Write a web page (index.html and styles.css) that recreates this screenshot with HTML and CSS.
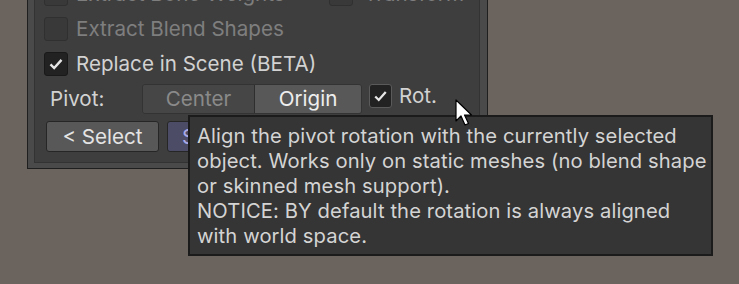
FILE: index.html
```html
<!DOCTYPE html>
<html>
<head>
<meta charset="utf-8">
<link rel="stylesheet" href="styles.css">
</head>
<body>
<div class="window">
  <div class="inner">
    <div class="row check-row">
      <span class="cb cb-off"></span><span class="lbl dis first-lbl">Extract Bone Weights</span>
      <span class="cb cb-off"></span><span class="lbl dis second-lbl">Transform</span>
    </div>
    <div class="row check-row">
      <span class="cb cb-off"></span><span class="lbl dis">Extract Blend Shapes</span>
    </div>
    <div class="row check-row">
      <span class="cb cb-on"><svg viewBox="0 0 24 24" width="24" height="24"><path d="M6 12.5 L10 16.5 L18 7.5" fill="none" stroke="#e6e6e6" stroke-width="2.6"/></svg></span><span class="lbl">Replace in Scene (BETA)</span>
    </div>
    <div class="row pivot-row">
      <span class="pivot-lbl">Pivot:</span>
      <div class="seg">
        <span class="seg-btn seg-center">Center</span>
        <span class="seg-btn seg-origin">Origin</span>
      </div>
      <span class="cb cb-on cb-hover"><svg viewBox="0 0 24 24" width="22" height="22"><path d="M6 12.5 L10 16.5 L18 7.5" fill="none" stroke="#e6e6e6" stroke-width="2.6"/></svg></span><span class="lbl">Rot.</span>
    </div>
    <div class="row btn-row">
      <span class="btn">&lt; Select</span>
      <span class="btn btn-blue">Scene</span>
    </div>
  </div>
</div>
<div class="tooltip">Align the pivot rotation with the currently selected<br>object. Works only on static meshes (no blend shape<br>or skinned mesh support).<br>NOTICE: BY default the rotation is always aligned<br>with world space.</div>
<svg class="cursor" viewBox="0 0 20 28" width="20" height="28"><path d="M1 1 L1 22 L6 17 L10 26 L13.5 24.5 L9.5 16 L16.5 16 Z" fill="#ffffff" stroke="#000000" stroke-width="1.2" stroke-linejoin="round"/></svg>
</body>
</html>
```

FILE: styles.css
```css
html, body {
  margin: 0;
  padding: 0;
}
body {
  background: #6b635d;
  font-family: Inter, "Noto Sans", sans-serif;
  font-size: 20.6px;
  color: #d2d2d2;
  width: 739px;
  height: 284px;
  overflow: hidden;
  position: relative;
}
.window {
  margin-left: 27px;
  margin-top: -27px;
  background: #4a4a4a;
  border: 1px solid #1f1f1f;
  border-top: none;
  padding: 0 7px 5px 6px;
  box-sizing: content-box;
  width: 446px;
}
.inner {
  background: #3e3e3e;
  border: 1px solid #333333;
  border-top: none;
  padding: 9px 0 10px 0;
  display: flex;
  flex-direction: column;
}
.row {
  display: flex;
  align-items: center;
}
.check-row {
  height: 24px;
  padding-left: 9px;
  margin-bottom: 11px;
}
.check-row:nth-child(3) {
  margin-bottom: 8px;
}
.cb {
  width: 24px;
  height: 24px;
  box-sizing: border-box;
  border-radius: 3px;
  flex: none;
  display: flex;
  align-items: center;
  justify-content: center;
}
.cb-off {
  background: #393939;
  border: 1px solid #303030;
}
.cb-on {
  background: #222222;
  border: 1px solid #191919;
}
.lbl {
  margin-left: 8px;
  line-height: 24px;
  white-space: nowrap;
}
.first-lbl {
  width: 253px;
  flex: none;
}
.second-lbl {
  margin-left: 11px;
}
.dis {
  color: #7e7e7e;
}
.pivot-row {
  height: 30px;
  padding-left: 15px;
  margin-bottom: 7px;
}
.pivot-lbl {
  width: 92px;
  line-height: 24px;
  flex: none;
}
.seg {
  display: flex;
  height: 30px;
  border-radius: 3px;
  overflow: hidden;
  border: 1px solid #333333;
  box-sizing: border-box;
  flex: none;
}
.seg-btn {
  display: flex;
  align-items: center;
  justify-content: center;
  line-height: 24px;
}
.seg-center {
  width: 111px;
  background: #464646;
  color: #8a8a8a;
}
.seg-origin {
  width: 106px;
  background: #585858;
  color: #eeeeee;
  border-left: 1px solid #2e2e2e;
}
.cb-hover {
  width: 23px;
  height: 24px;
  margin-left: 7px;
  border: 1px solid #5a5a5a;
  margin-top: -6px;
}
.pivot-row .lbl {
  margin-left: 7px;
  margin-top: -6px;
}
.btn-row {
  height: 31px;
  padding-left: 11px;
  gap: 8px;
}
.btn {
  height: 31px;
  box-sizing: border-box;
  border: 1px solid #262626;
  border-radius: 3px;
  background: #585858;
  color: #e4e4e4;
  display: flex;
  align-items: center;
  justify-content: center;
  line-height: 24px;
}
.btn:first-child {
  width: 113px;
}
.btn-blue {
  width: 130px;
  background: #4c4c66;
  color: #a9a9e8;
  justify-content: flex-start;
  padding-left: 14px;
}
.tooltip {
  position: absolute;
  left: 188px;
  top: 115px;
  width: 525px;
  height: 141px;
  box-sizing: border-box;
  background: #353535;
  border: 2px solid #1b1b1b;
  padding: 6px 0 0 7px;
  font-size: 20.2px;
  letter-spacing: 0.1px;
  line-height: 25px;
  color: #d4d4d4;
  white-space: nowrap;
}
.cursor {
  position: absolute;
  left: 455px;
  top: 99px;
}
```
